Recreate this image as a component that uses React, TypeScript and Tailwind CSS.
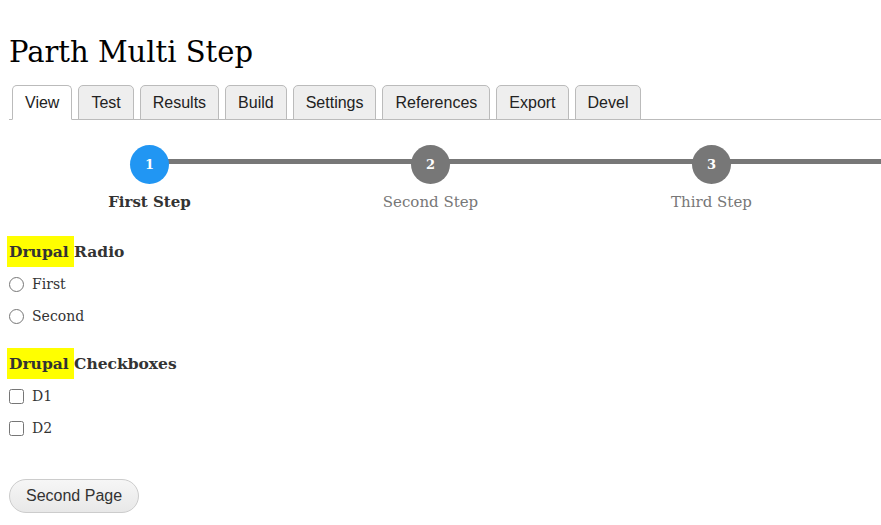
const tabs = ['View', 'Test', 'Results', 'Build', 'Settings', 'References', 'Export', 'Devel'];

const steps = [
  { n: 1, label: 'First Step' },
  { n: 2, label: 'Second Step' },
  { n: 3, label: 'Third Step' },
];

const serif = "font-['DejaVu_Serif',Georgia,serif]";

export default function App() {
  return (
    <div className={`w-[881px] h-[525px] overflow-hidden bg-white text-[#333] ${serif}`}>
      <div className="pl-[9px]">
        <h1 className="pt-[33px] text-[29px] leading-[38px] text-black">Parth Multi Step</h1>

        {/* Tabs */}
        <ul className="mt-[14px] flex gap-[6px] pl-[3px] border-b border-[#bbb] font-['Liberation_Sans',Arial,sans-serif] text-[16px]">
          {tabs.map((t, i) => (
            <li
              key={t}
              className={`-mb-px h-[35px] px-[12px] flex items-center border border-[#bbb] rounded-t-[5px] ${
                i === 0 ? 'bg-white border-b-white text-[#222]' : 'bg-[#eee] text-[#222]'
              }`}
            >
              {t}
            </li>
          ))}
        </ul>

        {/* Progress */}
        <div className="relative mt-[25px] h-[91px] overflow-hidden">
          <div className="absolute left-[140px] top-[14px] h-[5px] right-0 bg-[#777]" />
          <ol className="relative flex">
            {steps.map((s, i) => (
              <li key={s.n} className="w-[281px] flex flex-col items-center">
                <div
                  className={`w-[39px] h-[39px] rounded-full flex items-center justify-center text-white text-[13px] font-bold ${
                    i === 0 ? 'bg-[#2196f3]' : 'bg-[#777]'
                  }`}
                >
                  {s.n}
                </div>
                <div className={`mt-[7px] text-[15px] ${i === 0 ? 'font-bold text-[#333]' : 'text-[#777]'}`}>
                  {s.label}
                </div>
              </li>
            ))}
          </ol>
        </div>

        {/* Radios */}
        <fieldset>
          <legend className="text-[15.5px] font-bold leading-[32px]">
            <span className="bg-[#ffff00] -ml-[2px] pl-[2px] py-[6px]">Drupal </span>Radio
          </legend>
          {['First', 'Second'].map((o) => (
            <label key={o} className="flex items-center h-[32px] text-[14px]">
              <input type="radio" name="r" className="w-[15px] h-[15px] mr-[8px]" />
              {o}
            </label>
          ))}
        </fieldset>

        <fieldset className="mt-[16px]">
          <legend className="text-[15.5px] font-bold leading-[32px]">
            <span className="bg-[#ffff00] -ml-[2px] pl-[2px] py-[6px]">Drupal </span>Checkboxes
          </legend>
          {['D1', 'D2'].map((o) => (
            <label key={o} className="flex items-center h-[32px] text-[14px]">
              <input type="checkbox" className="w-[15px] h-[15px] mr-[8px]" />
              {o}
            </label>
          ))}
        </fieldset>

        <button className="mt-[35px] h-[34px] px-[16px] rounded-full border border-[#ccc] bg-gradient-to-b from-[#f6f6f6] to-[#e8e8e8] text-[#333] text-[16px] font-['Liberation_Sans',Arial,sans-serif]">
          Second Page
        </button>
      </div>
    </div>
  );
}
